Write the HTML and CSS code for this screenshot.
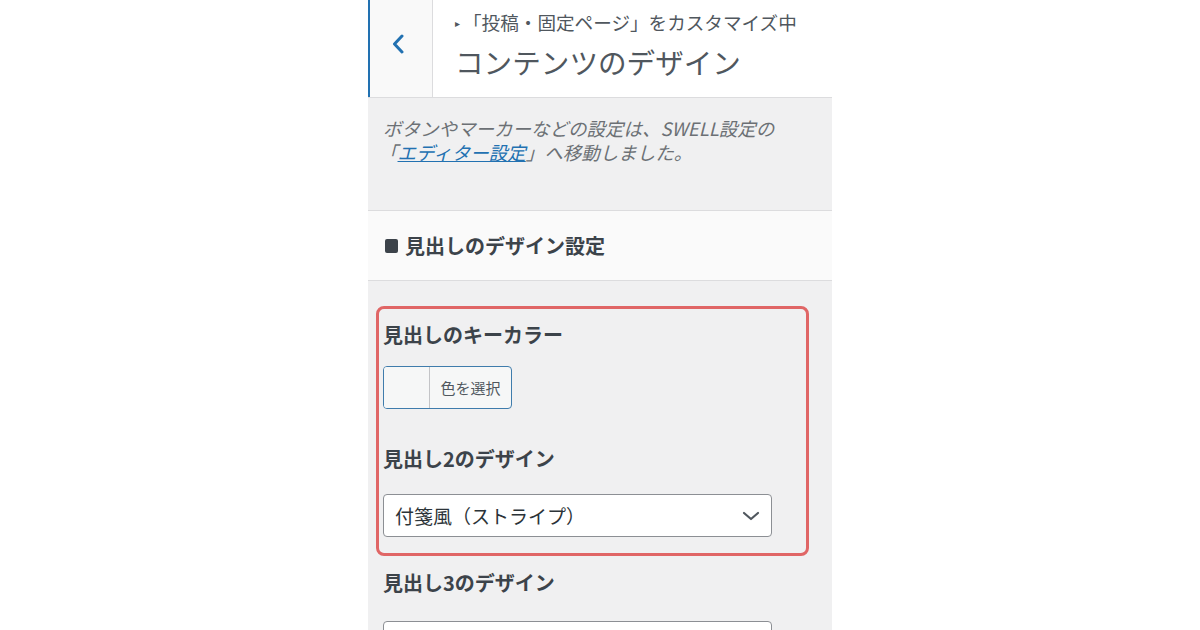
FILE: index.html
```html
<!DOCTYPE html>
<html lang="ja">
<head>
<meta charset="utf-8">
<link rel="stylesheet" href="styles.css">
</head>
<body>
<div class="panel">
  <div class="header">
    <div class="back">
      <svg width="14" height="20" viewBox="0 0 14 20"><path d="M11 2 L3.5 10 L11 18" fill="none" stroke="#2271b1" stroke-width="3" stroke-linecap="round" stroke-linejoin="round"/></svg>
    </div>
    <div class="titles">
      <div class="crumb"><span class="tri">▸</span>「投稿・固定ページ」をカスタマイズ中</div>
      <div class="title">コンテンツのデザイン</div>
    </div>
  </div>
  <div class="desc">ボタンやマーカーなどの設定は、SWELL設定の<br><span class="q">「<a href="#" class="link">エディター設定</a>」</span>へ移動しました。</div>
  <div class="section-head"><span class="sq"></span>見出しのデザイン設定</div>
  <div class="controls">
    <div class="highlight">
      <div class="label first">見出しのキーカラー</div>
      <div class="color-btn"><span class="swatch"></span><span class="color-text">色を選択</span></div>
      <div class="label second">見出し2のデザイン</div>
      <div class="select"><span>付箋風（ストライプ）</span>
        <svg width="18" height="10" viewBox="0 0 18 10"><path d="M2 2 L9 8 L16 2" fill="none" stroke="#50575e" stroke-width="2.2" stroke-linecap="round" stroke-linejoin="round"/></svg>
      </div>
    </div>
    <div class="label third">見出し3のデザイン</div>
    <div class="select"></div>
  </div>
</div>
</body>
</html>
```

FILE: styles.css
```css
html, body {
  margin: 0;
  padding: 0;
  background: #ffffff;
}
body {
  font-family: "Noto Sans CJK JP", "Noto Sans", sans-serif;
  color: #3c434a;
}
.panel {
  margin-left: 368px;
  width: 464px;
  height: 630px;
  background: #f0f0f1;
  overflow: hidden;
}
.header {
  display: flex;
  height: 97px;
  background: #ffffff;
  border-bottom: 1px solid #dcdcde;
}
.back {
  width: 65px;
  flex: none;
  border-left: 2px solid #2271b1;
  border-right: 1px solid #dcdcde;
  background: #f9f9f9;
  display: flex;
  justify-content: center;
  padding-top: 34px;
  box-sizing: border-box;
}
.back svg {
  margin-left: -6px;
}
.titles {
  padding-left: 22px;
  padding-top: 9px;
}
.crumb {
  font-size: 18.6px;
  line-height: 26px;
  color: #50575e;
}
.tri {
  font-size: 10px;
  display: inline-block;
  width: 8px;
  vertical-align: 3px;
}
.title {
  font-size: 28.6px;
  line-height: 40px;
  margin-top: 6px;
  color: #50575e;
}
.desc {
  padding: 18px 10px 45px 15px;
  font-size: 18.5px;
  line-height: 24px;
  font-style: italic;
  color: #6c7075;
  border-bottom: 1px solid #dcdcde;
  height: 113px;
  box-sizing: border-box;
  white-space: nowrap;
}
.q {
  margin-left: -4px;
}
.link {
  color: #2271b1;
  text-decoration: underline;
}
.section-head {
  height: 70px;
  box-sizing: border-box;
  background: #fafafa;
  border-bottom: 1px solid #dcdcde;
  display: flex;
  align-items: center;
  padding-left: 17px;
  font-size: 20px;
  font-weight: bold;
  color: #3c434a;
}
.sq {
  display: inline-block;
  width: 13px;
  height: 14px;
  border-radius: 2px;
  background: #3c434a;
  margin-right: 7px;
}
.controls {
  padding: 25px 0 0 15px;
}
.highlight {
  margin-left: -7px;
  width: 433px;
  box-sizing: border-box;
  border: 3px solid #e06666;
  border-radius: 8px;
  padding: 12px 4px 16px 4px;
}
.label {
  font-size: 20px;
  font-weight: bold;
  line-height: 28px;
  color: #3c434a;
}
.color-btn {
  margin-top: 17px;
  width: 129px;
  height: 43px;
  box-sizing: border-box;
  border: 1px solid #3f7cac;
  border-radius: 4px;
  background: #f6f7f7;
  display: flex;
  overflow: hidden;
}
.swatch {
  width: 45px;
  border-right: 1px solid #c3c4c7;
  background: #f6f7f7;
}
.color-text {
  flex: 1;
  display: flex;
  align-items: center;
  justify-content: center;
  font-size: 15px;
  color: #50575e;
}
.label.second {
  margin-top: 36px;
}
.select {
  margin-top: 21px;
  width: 389px;
  height: 43px;
  box-sizing: border-box;
  border: 1px solid #8c8f94;
  border-radius: 4px;
  background: #ffffff;
  display: flex;
  align-items: center;
  justify-content: space-between;
  padding: 0 11px 0 11px;
  font-size: 19px;
  color: #2c3338;
}
.label.third {
  margin-top: 13px;
}
.label.third + .select {
  margin-top: 24px;
}
```
